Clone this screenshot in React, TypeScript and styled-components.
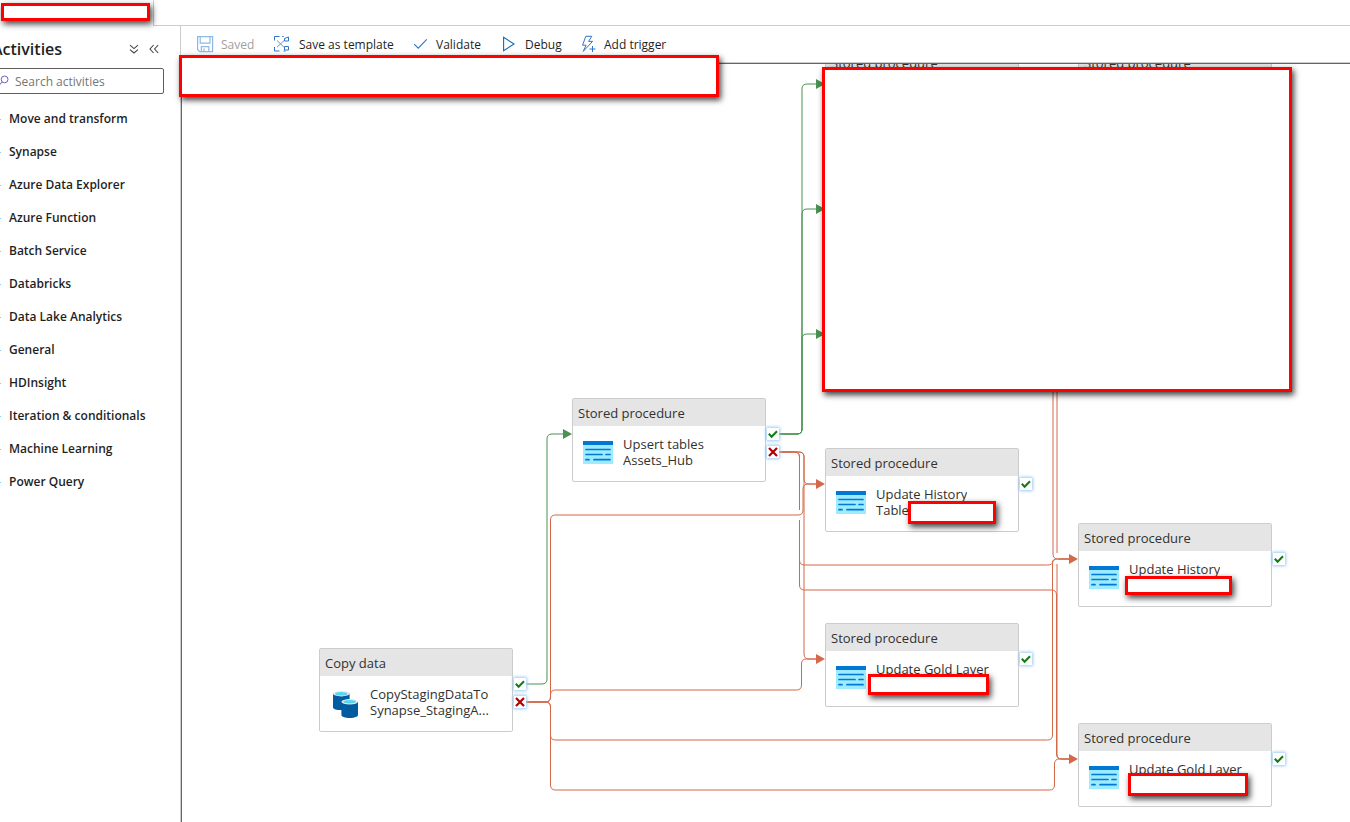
import React from "react";
import styled, { createGlobalStyle } from "styled-components";

const GlobalStyle = createGlobalStyle`
  * { box-sizing: border-box; }
  body {
    margin: 0;
    background: #fff;
    color: #1f1f1f;
    font-family: "Open Sans", "Noto Sans", sans-serif;
    font-size: 12px;
  }
  button { font: inherit; color: inherit; background: none; border: 0; padding: 0; cursor: pointer; }
`;

const GREEN = "#4a9152";
const ORANGE = "#d4694a";

/* ---------- page frame ---------- */

const Page = styled.div`
  display: flex;
  flex-direction: column;
  min-height: 100vh;
  overflow: hidden;
`;

const TabStrip = styled.header`
  display: flex;
  height: 26px;
`;

const Tab = styled.div`
  position: relative;
  width: 153px;
  flex: none;
`;

const TabRest = styled.div`
  flex: 1;
  border-left: 1px solid #ccc;
  border-bottom: 1px solid #ccc;
`;

const Body = styled.div`
  display: flex;
  flex: 1;
`;

const Mask = styled.div<{ x: number; y: number; w: number; h: number }>`
  position: absolute;
  z-index: 5;
  left: ${(p) => p.x}px;
  top: ${(p) => p.y}px;
  width: ${(p) => p.w}px;
  height: ${(p) => p.h}px;
  background: #fff;
  border: 3px solid #f00;
  box-shadow: 2px 3px 6px rgba(0, 0, 0, 0.75);
`;

/* ---------- activities panel ---------- */

const Sidebar = styled.aside`
  width: 180px;
  flex: none;
  overflow: hidden;
`;

const SidebarInner = styled.div`
  display: flex;
  flex-direction: column;
  margin-left: -12px;
  padding-top: 12px;
`;

const PanelHead = styled.div`
  display: flex;
  align-items: center;
  height: 22px;
  padding: 0 20px 0 4px;
`;

const PanelTitle = styled.h2`
  flex: 1;
  margin: 0;
  font-size: 16px;
  line-height: 22px;
  font-weight: 600;
`;

const HeadButton = styled.button`
  display: flex;
  width: 12px;
  height: 12px;
  margin-left: 8px;
`;

const SearchField = styled.label`
  display: flex;
  align-items: center;
  height: 26px;
  margin: 8px 16px 8px 0;
  padding-left: 10px;
  border: 1px solid #605e5c;
  border-radius: 2px;
`;

const SearchInput = styled.input`
  flex: 1;
  min-width: 0;
  margin-left: 6px;
  padding: 2px 0 0;
  border: 0;
  outline: 0;
  background: none;
  font: inherit;
  line-height: 20px;
  &::placeholder { color: #767676; opacity: 1; }
`;

const ActivityList = styled.ul`
  margin: 0;
  padding: 0;
  list-style: none;
`;

const ActivityButton = styled.button`
  display: flex;
  align-items: center;
  width: 100%;
  height: 33px;
  padding-left: 5px;
  gap: 8px;
  font-weight: 600;
  white-space: nowrap;
`;

/* ---------- toolbar ---------- */

const Main = styled.main`
  position: relative;
  display: flex;
  flex-direction: column;
  flex: 1;
  min-width: 0;
  border-left: 1px solid #ccc;
`;

const Toolbar = styled.div`
  display: flex;
  align-items: center;
  height: 37px;
  padding-left: 15px;
  border-bottom: 1px solid #ccc;
`;

const ToolButton = styled.button<{ w: number }>`
  display: flex;
  align-items: center;
  gap: 7px;
  width: ${(p) => p.w}px;
  height: 36px;
  white-space: nowrap;
  &:disabled { color: #a19f9d; }
  svg { flex: none; }
`;

/* ---------- pipeline canvas ---------- */

const Canvas = styled.section`
  position: relative;
  flex: 1;
  min-height: 744px;
  overflow: hidden;
  border-left: 1px solid #666;
  border-top: 1px solid #666;
`;

const Wires = styled.svg`
  position: absolute;
  left: 0;
  top: 0;
  width: 100%;
  height: 100%;
`;

const Node = styled.article<{ x: number; y: number }>`
  position: absolute;
  left: ${(p) => p.x}px;
  top: ${(p) => p.y}px;
  width: 194px;
  height: 84px;
  background: #fff;
  border: 1px solid #ccc;
  border-radius: 2px;
  color: #323130;
  font-size: 13px;
`;

const NodeHead = styled.div`
  height: 27px;
  padding: 0 5px;
  background: #e5e5e5;
  line-height: 28px;
`;

const NodeBody = styled.div`
  display: flex;
  gap: 10px;
  padding: 10px;
`;

const NodeIcon = styled.div`
  width: 30px;
  flex: none;
  padding-top: 5px;
  svg { display: block; }
`;

const NodeName = styled.div`
  height: 32px;
  overflow: hidden;
  line-height: 16px;
  white-space: pre;
`;

const Ports = styled.div`
  position: absolute;
  left: 194px;
  top: 29px;
  display: flex;
  flex-direction: column;
  gap: 6px;
`;

const Port = styled.div`
  width: 12px;
  height: 12px;
  background: #fff;
  box-shadow: 0 0 3px 1px #9ccbf5;
  svg { display: block; }
`;

/* ---------- icons ---------- */

const stroke = { fill: "none", stroke: "#3374c4", strokeWidth: 1.1 };

const SaveIcon = () => (
  <svg width="18" height="18" viewBox="0 0 18 18" fill="none" stroke="#8dbbe3" strokeWidth="1.2">
    <path d="M1.6 1.6h15v15H3.8l-2.2-2.2z" />
    <path d="M4.2 1.6v6.6h9.8V1.6M5.4 16.6v-5h7.4v5M8 13.4v3" />
  </svg>
);
const TemplateIcon = () => (
  <svg width="18" height="18" viewBox="0 0 18 18" {...stroke} strokeWidth="1">
    <path d="M5.500 1.500h-5v4M.5 12v4h5M9.500 16h2" />
    <path d="M10.500 3.500l4-1.500v4h-4zM10.500 11.500h4v3.500h-4z" />
    <path d="M3 5.500l3.500 3.300L3 12.200M6.500 8.800l4-3.600M6.500 8.800l4 4M8 1.500h2" opacity=".75" />
  </svg>
);
const CheckIcon = () => (
  <svg width="18" height="18" viewBox="0 0 18 18" {...stroke}>
    <path d="M3.2 9.2l4 4L15.8 4.4" />
  </svg>
);
const PlayIcon = () => (
  <svg width="18" height="18" viewBox="0 0 18 18" {...stroke}>
    <path d="M3.6 2.2v13.6L14 9z" stroke="#0f6cbd" />
  </svg>
);
const TriggerIcon = () => (
  <svg width="18" height="18" viewBox="0 0 18 18" {...stroke} strokeWidth="1">
    <path d="M6.8 1.3h6L9.6 6.4h4L4.2 16.4l2.9-6.2H3.6z" />
    <path d="M13.500 11v6M10.500 14h6" />
  </svg>
);
const DoubleDown = () => (
  <svg width="12" height="12" viewBox="0 0 12 12" fill="none" stroke="#444" strokeWidth="1.1">
    <path d="M2 2.2l4 3.4 4-3.4M2 6.6L6 10l4-3.4" />
  </svg>
);
const DoubleLeft = () => (
  <svg width="12" height="12" viewBox="0 0 12 12" fill="none" stroke="#444" strokeWidth="1.1">
    <path d="M5.6 2L2 6l3.6 4M10.2 2L6.6 6l3.6 4" />
  </svg>
);
const SearchIcon = () => (
  <svg width="10" height="12" viewBox="0 0 10 12" fill="none" stroke="#6a5fd0" strokeWidth="1">
    <circle cx="5.6" cy="4.4" r="3.4" />
    <path d="M3 7L0 10.6" />
  </svg>
);
const ItemChevron = () => (
  <svg width="8" height="8" viewBox="0 0 8 8" fill="none" stroke="#57b8ea">
    <path d="M4 1l3.500 3.500L4 8" />
  </svg>
);
const ProcedureIcon = () => (
  <svg width="30" height="23" viewBox="0 0 30 23">
    <path d="M0 0h30v23H0z" fill="#9cebff" />
    <path d="M0 0h30v4H0z" fill="#0078d4" />
    <path
      d="M3 8.500h24M3 13.500h16M23 13.500h4M3 18.700h3M11 18.700h16"
      stroke="#0078d4"
      strokeWidth="1.7"
      strokeLinecap="round"
    />
  </svg>
);
const CopyIcon = () => (
  <svg width="30" height="27" viewBox="-3 0 30 27">
    <path d="M0 2.500v14c0 1.600 3.600 2.600 8.300 2.600s8.300-1 8.300-2.600v-14z" fill="#005ba1" />
    <ellipse cx="8.300" cy="2.700" rx="8.300" ry="2.700" fill="#e8e8e8" />
    <ellipse cx="8.300" cy="2.700" rx="6.200" ry="1.700" fill="#50d8f2" />
    <path d="M8.400 11v13c0 1.600 3.600 3 8.300 3s8.300-1.400 8.300-3V11z" fill="#005ba1" />
    <ellipse cx="16.700" cy="10.800" rx="8.300" ry="2.700" fill="#e8e8e8" />
    <ellipse cx="16.700" cy="10.800" rx="6.200" ry="1.700" fill="#50d8f2" />
  </svg>
);
const Success = () => (
  <Port>
    <svg width="12" height="12" viewBox="0 0 12 12" fill="none" stroke="#107c10" strokeWidth="2">
      <path d="M1.800 5.800l2.800 3 5.400-5.600" />
    </svg>
  </Port>
);
const Failure = () => (
  <Port>
    <svg width="12" height="12" viewBox="0 0 12 12" fill="none" stroke="#b00000" strokeWidth="2.200">
      <path d="M2 2l8 8M10 2l-8 8" />
    </svg>
  </Port>
);

/* ---------- data ---------- */

const activities = [
  "Move and transform",
  "Synapse",
  "Azure Data Explorer",
  "Azure Function",
  "Batch Service",
  "Databricks",
  "Data Lake Analytics",
  "General",
  "HDInsight",
  "Iteration & conditionals",
  "Machine Learning",
  "Power Query",
];

const tools = [
  { label: "Saved", icon: <SaveIcon />, w: 78, disabled: true },
  { label: "Save as template", icon: <TemplateIcon />, w: 137 },
  { label: "Validate", icon: <CheckIcon />, w: 89 },
  { label: "Debug", icon: <PlayIcon />, w: 79 },
  { label: "Add trigger", icon: <TriggerIcon />, w: 96 },
];

type NodeData = { x: number; y: number; type: string; name: string; failure?: boolean };

const nodes: NodeData[] = [
  { x: 643, y: -16, type: "Stored procedure", name: "" },
  { x: 896, y: -16, type: "Stored procedure", name: "" },
  { x: 390, y: 334, type: "Stored procedure", name: "Upsert tables\nAssets_Hub", failure: true },
  { x: 643, y: 384, type: "Stored procedure", name: "Update History\nTable" },
  { x: 896, y: 459, type: "Stored procedure", name: "Update History" },
  { x: 643, y: 559, type: "Stored procedure", name: "Update Gold Layer" },
  { x: 137, y: 584, type: "Copy data", name: "CopyStagingDataTo\nSynapse_StagingA...", failure: true },
  { x: 896, y: 659, type: "Stored procedure", name: "Update Gold Layer" },
];

const masks = [
  { x: 640, y: 3, w: 470, h: 325 },
  { x: 726, y: 437, w: 88, h: 23 },
  { x: 943, y: 512, w: 107, h: 19 },
  { x: 686, y: 610, w: 121, h: 21 },
  { x: 946, y: 709, w: 120, h: 23 },
];

type Point = [number, number];

/* Orthogonal route with rounded corners. */
function route(points: Point[], radius = 5) {
  let d = `M${points[0][0]} ${points[0][1]}`;
  for (let i = 1; i < points.length - 1; i++) {
    const [px, py] = points[i - 1];
    const [x, y] = points[i];
    const [nx, ny] = points[i + 1];
    const a = Math.min(radius, Math.hypot(x - px, y - py) / 2);
    const b = Math.min(radius, Math.hypot(nx - x, ny - y) / 2);
    d += `L${x - Math.sign(x - px) * a} ${y - Math.sign(y - py) * a}`;
    d += `Q${x} ${y} ${x + Math.sign(nx - x) * b} ${y + Math.sign(ny - y) * b}`;
  }
  const [ex, ey] = points[points.length - 1];
  return `${d}L${ex} ${ey}`;
}

const greenWires: Point[][] = [
  [[344, 620], [365, 620], [365, 370], [382, 370]],
  [[597, 370], [620, 370], [620, 20], [634, 20]],
  [[597, 370], [620, 370], [620, 145], [634, 145]],
  [[597, 370], [620, 370], [620, 270], [634, 270]],
];

/* These pass under other wires and are interrupted where they cross. */
const lowerWires: Point[][] = [
  [[597, 388], [617.5, 388], [617.5, 501], [870.5, 501], [870.5, 495], [888, 495]],
  [[597, 388], [617.5, 388], [617.5, 526], [874.5, 526], [874.5, 695], [888, 695]],
  [[875, 300], [875, 695], [888, 695]],
];

const upperWires: Point[][] = [
  [[597, 388], [622, 388], [622, 420], [635, 420]],
  [[597, 388], [622, 388], [622, 595], [635, 595]],
  [[344, 638], [368.5, 638], [368.5, 451], [621, 451], [621, 420], [635, 420]],
  [[344, 638], [368.5, 638], [368.5, 626], [619.5, 626], [619.5, 595], [635, 595]],
  [[344, 638], [368.5, 638], [368.5, 676], [870.5, 676], [870.5, 495], [888, 495]],
  [[344, 638], [368.5, 638], [368.5, 726], [872.5, 726], [872.5, 695], [888, 695]],
  [[871, 300], [871, 495], [888, 495]],
];

const greenTips: Point[] = [[390, 370], [643, 20], [643, 145], [643, 270]];
const orangeTips: Point[] = [[643, 420], [643, 595], [896, 495], [896, 695]];
const tip = ([x, y]: Point) => `M${x} ${y}l-9 -5v10z`;

export default function App() {
  return (
    <Page>
      <GlobalStyle />
      <TabStrip>
        <Tab>
          <Mask x={1} y={3} w={149} h={18} />
        </Tab>
        <TabRest />
      </TabStrip>
      <Body>
        <Sidebar>
          <SidebarInner>
            <PanelHead>
              <PanelTitle>Activities</PanelTitle>
              <HeadButton aria-label="Expand all"><DoubleDown /></HeadButton>
              <HeadButton aria-label="Collapse panel"><DoubleLeft /></HeadButton>
            </PanelHead>
            <SearchField>
              <SearchIcon />
              <SearchInput type="text" placeholder="Search activities" aria-label="Search activities" />
            </SearchField>
            <ActivityList>
              {activities.map((name) => (
                <li key={name}>
                  <ActivityButton><ItemChevron />{name}</ActivityButton>
                </li>
              ))}
            </ActivityList>
          </SidebarInner>
        </Sidebar>
        <Main>
          <Toolbar>
            {tools.map((t) => (
              <ToolButton key={t.label} w={t.w} disabled={t.disabled}>
                {t.icon}
                {t.label}
              </ToolButton>
            ))}
          </Toolbar>
          <Mask x={-2} y={29} w={540} h={42} />
          <Canvas>
            <Wires fill="none" strokeWidth="1">
              {greenWires.map((w, i) => <path key={i} d={route(w)} stroke={GREEN} />)}
              {lowerWires.map((w, i) => <path key={i} d={route(w)} stroke={ORANGE} />)}
              <path d="M617.500 446v10M875 489v11" stroke="#fff" strokeWidth="3" />
              {upperWires.map((w, i) => <path key={i} d={route(w)} stroke={ORANGE} />)}
              <path d={greenTips.map(tip).join("")} fill={GREEN} />
              <path d={orangeTips.map(tip).join("")} fill={ORANGE} />
            </Wires>
            {nodes.map((n) => (
              <Node key={`${n.x}-${n.y}`} x={n.x} y={n.y}>
                <NodeHead>{n.type}</NodeHead>
                <NodeBody>
                  <NodeIcon>{n.type === "Copy data" ? <CopyIcon /> : <ProcedureIcon />}</NodeIcon>
                  <NodeName>{n.name}</NodeName>
                </NodeBody>
                <Ports>
                  <Success />
                  {n.failure && <Failure />}
                </Ports>
              </Node>
            ))}
            {masks.map((m) => <Mask key={`${m.x}-${m.y}`} {...m} />)}
          </Canvas>
        </Main>
      </Body>
    </Page>
  );
}
